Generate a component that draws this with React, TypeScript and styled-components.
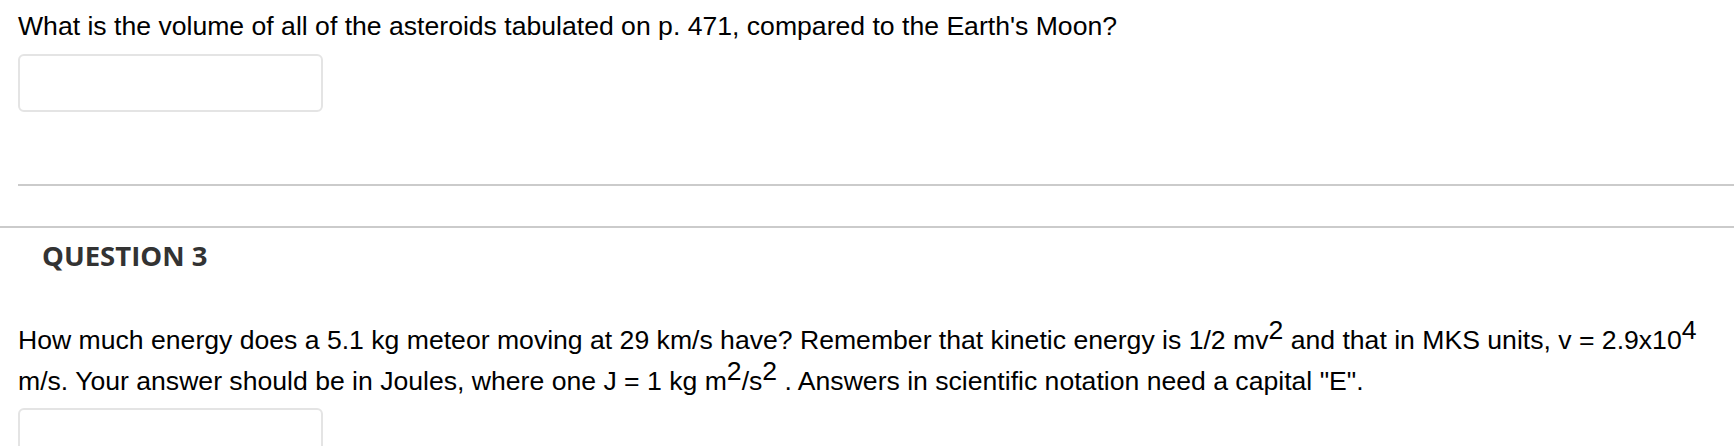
import React from 'react'
import styled, { createGlobalStyle } from 'styled-components'

const GlobalStyle = createGlobalStyle`
  html,
  body {
    margin: 0;
    padding: 0;
    background: #fff;
  }

  body {
    font-family: 'Liberation Sans', Arial, Helvetica, sans-serif;
    color: #000;
  }
`

const Page = styled.div`
  width: 1734px;
  height: 446px;
  overflow: hidden;
  padding-top: 6px;
  box-sizing: border-box;
`

const QuestionBody = styled.div`
  padding-left: 18px;
  padding-right: 18px;
`

const Prompt = styled.p`
  margin: 0;
  font-size: 26.6px;
  line-height: 41px;
`

const Sup = styled.sup`
  font-size: inherit;
  line-height: 0;
  vertical-align: 10px;
`

const AnswerInput = styled.input.attrs({ type: 'text' })<{ $top: number }>`
  display: block;
  box-sizing: border-box;
  width: 305px;
  height: 58px;
  margin: ${(p) => p.$top}px 0 0;
  border: 2px solid #e4e4e4;
  border-radius: 6px;
  background: #fff;
  outline: none;
`

const InnerRule = styled.hr`
  margin: 72px 0 0 18px;
  border: 0;
  border-top: 2px solid #cbcbcb;
  height: 0;
`

const ItemRule = styled.hr`
  margin: 40px 0 0;
  border: 0;
  border-top: 2px solid #cbcbcb;
  height: 0;
`

const QuestionHeading = styled.h3`
  margin: 9px 0 0;
  padding-left: 42px;
  font-family: 'Open Sans', 'Liberation Sans', sans-serif;
  font-weight: 700;
  font-size: 27.5px;
  color: #333;
`

const QuestionSection = styled.div`
  margin-top: 46px;
`

export default function App() {
  return (
    <Page>
      <GlobalStyle />
      <QuestionBody>
        <Prompt>What is the volume of all of the asteroids tabulated on p. 471, compared to the Earth's Moon?</Prompt>
        <AnswerInput $top={7} />
      </QuestionBody>
      <InnerRule />
      <ItemRule />
      <QuestionHeading>QUESTION 3</QuestionHeading>
      <QuestionSection>
        <QuestionBody>
          <Prompt>
            How much energy does a 5.1 kg meteor moving at 29 km/s have? Remember that kinetic energy is 1/2 mv
            <Sup>2</Sup> and that in MKS units, v = 2.9x10<Sup>4</Sup> m/s. Your answer should be in Joules, where one J = 1 kg m
            <Sup>2</Sup>/s<Sup>2</Sup> . Answers in scientific notation need a capital "E".
          </Prompt>
          <AnswerInput $top={6} />
        </QuestionBody>
      </QuestionSection>
    </Page>
  )
}
